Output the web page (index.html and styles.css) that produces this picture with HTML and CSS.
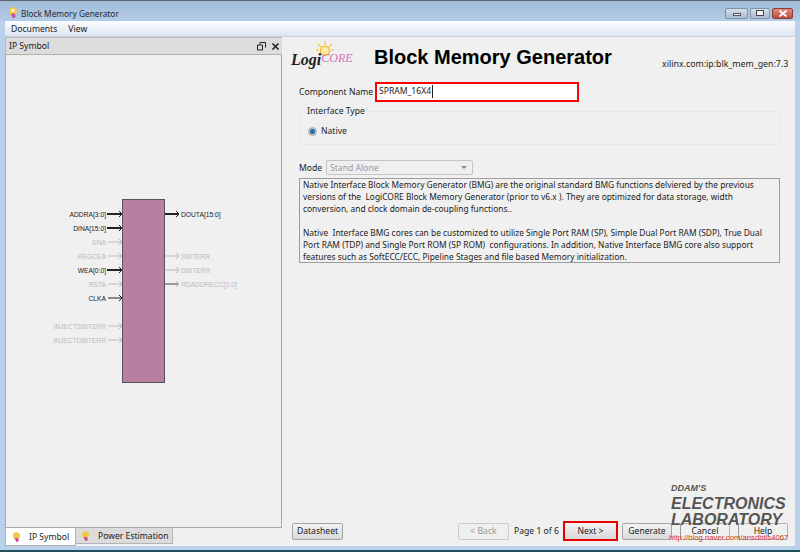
FILE: index.html
```html
<!DOCTYPE html>
<html lang="en">
<head>
<meta charset="utf-8">
<title>Block Memory Generator</title>
<link rel="stylesheet" href="styles.css">
</head>
<body>
<div class="window">
  <header class="titlebar">
    <svg class="bulb" width="10" height="13" viewBox="0 0 14 16"><circle cx="7" cy="6" r="5.500" fill="#f2c84a"/><circle cx="7" cy="5" r="2.500" fill="#fff6c0"/><path d="M4 10l5-1 2 5-4 2z" fill="#d84a8c"/></svg>
    <span class="title-text">Block Memory Generator</span>
    <div class="controls">
      <span class="ctl ctl-min"><i></i></span>
      <span class="ctl ctl-max"><i></i></span>
      <span class="ctl ctl-close">
        <svg width="10" height="7" viewBox="0 0 10 7"><path d="M1.500 .5l7 6M8.500 .5l-7 6" stroke="#fff" stroke-width="1.800"/></svg>
      </span>
    </div>
  </header>
  <nav class="menubar"><span>Documents</span><span>View</span></nav>
  <div class="frame">
    <div class="main">
      <section class="left">
        <div class="panel-head">
          <span>IP Symbol</span>
          <span class="panel-icons">
            <svg width="9" height="9" viewBox="0 0 9 9"><path d="M3 .5h5.500v5M3 .5v2M.5 3h5v5h-5z" fill="none" stroke="#222" stroke-width="1"/></svg>
            <svg width="9" height="9" viewBox="0 0 9 9"><path d="M1.500 1.500l6 6M7.500 1.500l-6 6" stroke="#222" stroke-width="1.600"/></svg>
          </span>
        </div>
        <div class="canvas">
          <svg class="symbol" width="275" height="472" viewBox="6 55 275 472">
            <defs>
              <g id="head"><path d="M-3-3L0 0l-3 3" fill="none" stroke="currentColor" stroke-width="1"/></g>
            </defs>
            <rect x="122.500" y="199.500" width="42" height="183" fill="#b87fa1" stroke="#555" stroke-width="1"/>
            <g class="pin on"><path d="M107 214h15" class="bus"/><use href="#head" x="122" y="214"/><text x="106" y="216.500" text-anchor="end">ADDRA[3:0]</text></g>
            <g class="pin on"><path d="M107 228h15" class="bus"/><use href="#head" x="122" y="228"/><text x="106" y="230.500" text-anchor="end">DINA[15:0]</text></g>
            <g class="pin off"><path d="M108 242h14"/><use href="#head" x="122" y="242"/><text x="106" y="244.500" text-anchor="end">ENA</text></g>
            <g class="pin off"><path d="M108 256h14"/><use href="#head" x="122" y="256"/><text x="106" y="258.500" text-anchor="end">REGCEA</text></g>
            <g class="pin on"><path d="M107 270h15" class="bus"/><use href="#head" x="122" y="270"/><text x="106" y="272.500" text-anchor="end">WEA[0:0]</text></g>
            <g class="pin off"><path d="M108 284h14"/><use href="#head" x="122" y="284"/><text x="106" y="286.500" text-anchor="end">RSTA</text></g>
            <g class="pin on"><path d="M108 298h14"/><use href="#head" x="122" y="298"/><text x="106" y="300.500" text-anchor="end">CLKA</text></g>
            <g class="pin off"><path d="M108 326h14"/><use href="#head" x="122" y="326"/><text x="106" y="328.500" text-anchor="end">INJECTSBITERR</text></g>
            <g class="pin off"><path d="M108 340h14"/><use href="#head" x="122" y="340"/><text x="106" y="342.500" text-anchor="end">INJECTDBITERR</text></g>
            <g class="pin on"><path d="M165 214h14" class="bus"/><use href="#head" x="179" y="214"/><text x="181" y="216.500">DOUTA[15:0]</text></g>
            <g class="pin off"><path d="M165 256h14"/><use href="#head" x="179" y="256"/><text x="181" y="258.500">SBITERR</text></g>
            <g class="pin off"><path d="M165 270h14"/><use href="#head" x="179" y="270"/><text x="181" y="272.500">DBITERR</text></g>
            <g class="pin off dim"><path d="M165 284h14" class="bus"/><use href="#head" x="179" y="284"/><text x="181" y="286.500">RDADDRECC[3:0]</text></g>
          </svg>
        </div>
        <div class="tabs">
          <span class="tab active"><svg class="bulb-s" width="9" height="12" viewBox="0 0 14 16"><circle cx="7" cy="6" r="5.500" fill="#f2c84a"/><path d="M4 10l5-1 2 5-4 2z" fill="#d84a8c"/></svg>IP Symbol</span>
          <span class="tab"><svg class="bulb-s" width="9" height="12" viewBox="0 0 14 16"><circle cx="7" cy="6" r="5.500" fill="#f2c84a"/><path d="M4 10l5-1 2 5-4 2z" fill="#d84a8c"/></svg>Power Estimation</span>
        </div>
      </section>
      <section class="right">
        <div class="head-row">
          <div class="logo">
            <svg class="sun" width="18" height="18" viewBox="0 0 20 20"><g stroke="#f2d23c" stroke-width="1.500"><path d="M10 0v5M2 3l4 4M18 3l-4 4M0 10h3M17 10h3"/></g><circle cx="10" cy="11" r="5" fill="#fbeea0" stroke="#f2b93c" stroke-width="1.500"/></svg>
            <span class="logi">Logi</span><span class="core">CORE</span>
          </div>
          <h1>Block Memory Generator</h1>
          <span class="vlnv">xilinx.com:ip:blk_mem_gen:7.3</span>
        </div>
        <div class="name-row">
          <label>Component Name</label>
          <div class="name-input"><span class="caret">SPRAM_16X4</span></div>
        </div>
        <fieldset class="iface">
          <legend>Interface Type</legend>
          <div class="radio-row"><span class="radio"></span>Native</div>
        </fieldset>
        <div class="mode-row">
          <label>Mode</label>
          <div class="select"><span>Stand Alone</span><i></i></div>
        </div>
        <div class="desc">
          <p>Native Interface Block Memory Generator (BMG) are the original standard BMG functions delviered by the previous<br>versions of the &nbsp;LogiCORE Block Memory Generator (prior to v6.x ). They are optimized for data storage, width<br>conversion, and clock domain de-coupling functions..</p>
          <p>Native &nbsp;Interface BMG cores can be customized to utilize Single Port RAM (SP), Simple Dual Port RAM (SDP), True Dual<br>Port RAM (TDP) and Single Port ROM (SP ROM) &nbsp;configurations. In addition, Native Interface BMG core also support<br>features such as SoftECC/ECC, Pipeline Stages and file based Memory initialization.</p>
        </div>
        <div class="spacer"></div>
        <div class="actions">
          <button class="btn ds">Datasheet</button>
          <div class="grow"></div>
          <button class="btn back" disabled>&lt; Back</button>
          <span class="page">Page 1 of 6</span>
          <button class="btn next">Next &gt;</button>
          <button class="btn gen">Generate</button>
          <button class="btn flat">Cancel</button>
          <button class="btn flat">Help</button>
        </div>
        <div class="watermark">
          <div class="wm1">DDAM'S</div>
          <div class="wm2">ELECTRONICS</div>
          <div class="wm2">LABORATORY</div>
          <div class="wm3">http://blog.naver.com/ansdbtls4067</div>
        </div>
      </section>
    </div>
  </div>
</div>
</body>
</html>
```
FILE: styles.css
```css
* { box-sizing: border-box; }
html, body { margin: 0; padding: 0; }
body { width: 800px; height: 552px; overflow: hidden; font-family: "Noto Sans", "Liberation Sans", sans-serif; font-size: 8.600px; color: #222; }
.window { width: 800px; height: 552px; display: flex; flex-direction: column; background: #b9d1ea; border-top: 1px solid #5a6672; border-bottom: 2px solid #20505c; }
.titlebar { height: 20px; flex: none; display: flex; align-items: center; padding-left: 8px; background: linear-gradient(#a3bcd8, #b2cbe6); }
.bulb { margin: 3px 3px 0 0; }
.title-text { font-size: 8.300px; color: #2a2a2a; margin-top: 4px; }
.controls { display: flex; margin: 4px 7px 0 auto; gap: 2px; }
.ctl { height: 11px; display: flex; align-items: center; justify-content: center; border: 1px solid #7f92a6; border-radius: 2px; background: linear-gradient(#d4dfeb, #a9bbcd); }
.ctl-min { width: 23px; }
.ctl-min i { width: 8px; height: 3px; margin-top: 3px; background: #eee; border: 1px solid #556; }
.ctl-max { width: 20px; }
.ctl-max i { width: 8px; height: 6px; background: #eee; border: 1px solid #445; }
.ctl-close { width: 21px; background: linear-gradient(#e08a80, #c04a3e); border-color: #8c3b35; }
.menubar { height: 16px; flex: none; margin: 0 5px; display: flex; gap: 11px; align-items: center; padding-left: 6px; background: linear-gradient(#fbfdff, #dbe5f2); border-bottom: 1px solid #c6d1de; font-size: 8.600px; }
.frame { flex: 1; min-height: 0; padding: 0 5px 4px 5px; background: #b9d1ea; }
.main { height: 100%; display: flex; background: #f0f0f0; }
.left { width: 277px; flex: none; display: flex; flex-direction: column; }
.panel-head { height: 17px; flex: none; display: flex; align-items: center; justify-content: space-between; padding: 0 2px 0 3px; background: #dcdcdc; border: 1px solid #b8b8b8; border-width: 1px 0 0 1px; font-size: 8.600px; }
.panel-icons { display: flex; gap: 5px; align-items: center; }
.canvas { flex: 1; min-height: 0; background: #f0f0f0; border: 1px solid #a8a8a8; border-top-color: #b0b0b0; }
.symbol { display: block; }
.symbol text { font-family: "Liberation Sans", sans-serif; font-size: 6.700px; }
.pin path { fill: none; stroke: currentColor; stroke-width: 1; }
.pin path.bus { stroke-width: 2; }
.pin text { fill: currentColor; stroke: none; }
.on { color: #222; }
.off { color: #bbb; }
.dim path.bus { stroke: #999; }
.tabs { height: 18px; flex: none; display: flex; align-items: flex-start; }
.tab { display: flex; align-items: center; height: 16px; padding: 0 0 0 5px; background: #dcdcdc; border: 1px solid #b4b4b4; border-top: 0; font-size: 8.600px; white-space: nowrap; }
.tab .bulb-s { margin-right: 8px; }
.tab.active { height: 18px; width: 71px; background: #fff; padding-left: 6px; }
.tab:not(.active) { width: 97px; border-left: 0; }
.right { flex: 1; min-width: 0; position: relative; display: flex; flex-direction: column; padding: 0 0 0 10px; }
.head-row { height: 45px; flex: none; display: flex; align-items: flex-start; }
.logo { position: relative; width: 83px; padding-top: 13px; margin-left: -1px; font-family: "Liberation Serif", serif; font-style: italic; font-size: 16px; line-height: 20px; white-space: nowrap; }
.sun { position: absolute; left: 25px; top: 4px; }
.logi { position: relative; color: #222; font-weight: 700; }
.core { position: relative; top: -3px; color: #d86fb0; font-size: 12px; }
h1 { margin: 6px 0 0 0; font-family: "Liberation Sans", sans-serif; font-size: 20px; line-height: 28px; font-weight: 700; color: #000; width: 288px; white-space: nowrap; }
.vlnv { margin-top: 21px; white-space: nowrap; font-size: 8.800px; }
.name-row { display: flex; align-items: center; height: 20px; margin-left: 7px; }
.name-row label { width: 76px; font-size: 8.600px; white-space: nowrap; }
.name-input { width: 204px; height: 20px; background: #fff; border: 2px solid #f00; padding: 1px 0 0 2px; font-size: 8.600px; line-height: 13px; }
.caret { display: inline-block; border-right: 1px solid #222; padding-right: 1px; }
.iface { margin: 3px 15px 0 7px; padding: 8px 0 0 8px; height: 40px; border: 1px solid #e4e8ec; border-radius: 2px; font-size: 8.600px; }
.iface legend { padding: 0 2px; margin-left: -3px; line-height: 12px; }
.radio-row { display: flex; align-items: center; gap: 4px; }
.radio { width: 9px; height: 9px; border-radius: 50%; background: radial-gradient(circle, #2d6ea0 0 2px, #a9c4d8 3px, #ddd 5px); border: 1px solid #aaa; }
.mode-row { display: flex; align-items: center; height: 15px; margin: 15px 0 0 7px; font-size: 8.600px; }
.mode-row label { width: 27px; }
.select { width: 147px; height: 15px; display: flex; align-items: center; justify-content: space-between; padding: 0 5px 0 3px; background: #efefef; border: 1px solid #c4c4c4; border-radius: 2px; color: #999; }
.select i { width: 0; height: 0; border: 3px solid transparent; border-top-color: #888; border-bottom: 0; }
.desc { width: 481px; height: 85px; margin: 3px 0 0 7px; padding: 0 0 0 3px; background: #f0f0f0; border: 1px solid #9c9c9c; font-size: 8.400px; line-height: 12px; color: #1c1c1c; overflow: hidden; white-space: nowrap; }
.desc p { margin: 0 0 12px 0; }
.spacer { flex: 1; }
.actions { height: 20px; display: flex; align-items: center; margin: 0 7px 5px 0; }
.grow { flex: 1; }
.btn { height: 17px; padding: 0; background: linear-gradient(#f4f4f4, #d8d8d8); border: 1px solid #a4a4a4; border-radius: 2px; font-family: inherit; font-size: 8.600px; color: #222; }
.ds { width: 51px; }
.back { width: 51px; color: #999; background: #efefef; border-color: #ccc; }
.page { width: 54px; padding-left: 5px; font-size: 8.600px; white-space: nowrap; }
.next { width: 55px; height: 20px; border: 2px solid #e60000; border-radius: 0; }
.gen { width: 50px; margin-left: 4px; }
.flat { width: 50px; background: none; border-color: #b4b4b4; border-left-color: #999; }
.flat + .flat { margin-left: 8px; }
.gen + .flat { margin-left: 8px; }
.watermark { position: absolute; left: 389px; bottom: 2px; width: 125px; color: #555; font-family: "Liberation Sans", sans-serif; font-style: italic; font-weight: 700; pointer-events: none; }
.wm1 { font-size: 9px; line-height: 11px; margin-bottom: 2px; }
.wm2 { font-size: 16px; line-height: 16px; }
.wm3 { font-size: 7.700px; line-height: 12px; color: #d03a20; font-style: normal; font-weight: 400; margin-top: 4px; margin-left: -2px; white-space: nowrap; }
```
